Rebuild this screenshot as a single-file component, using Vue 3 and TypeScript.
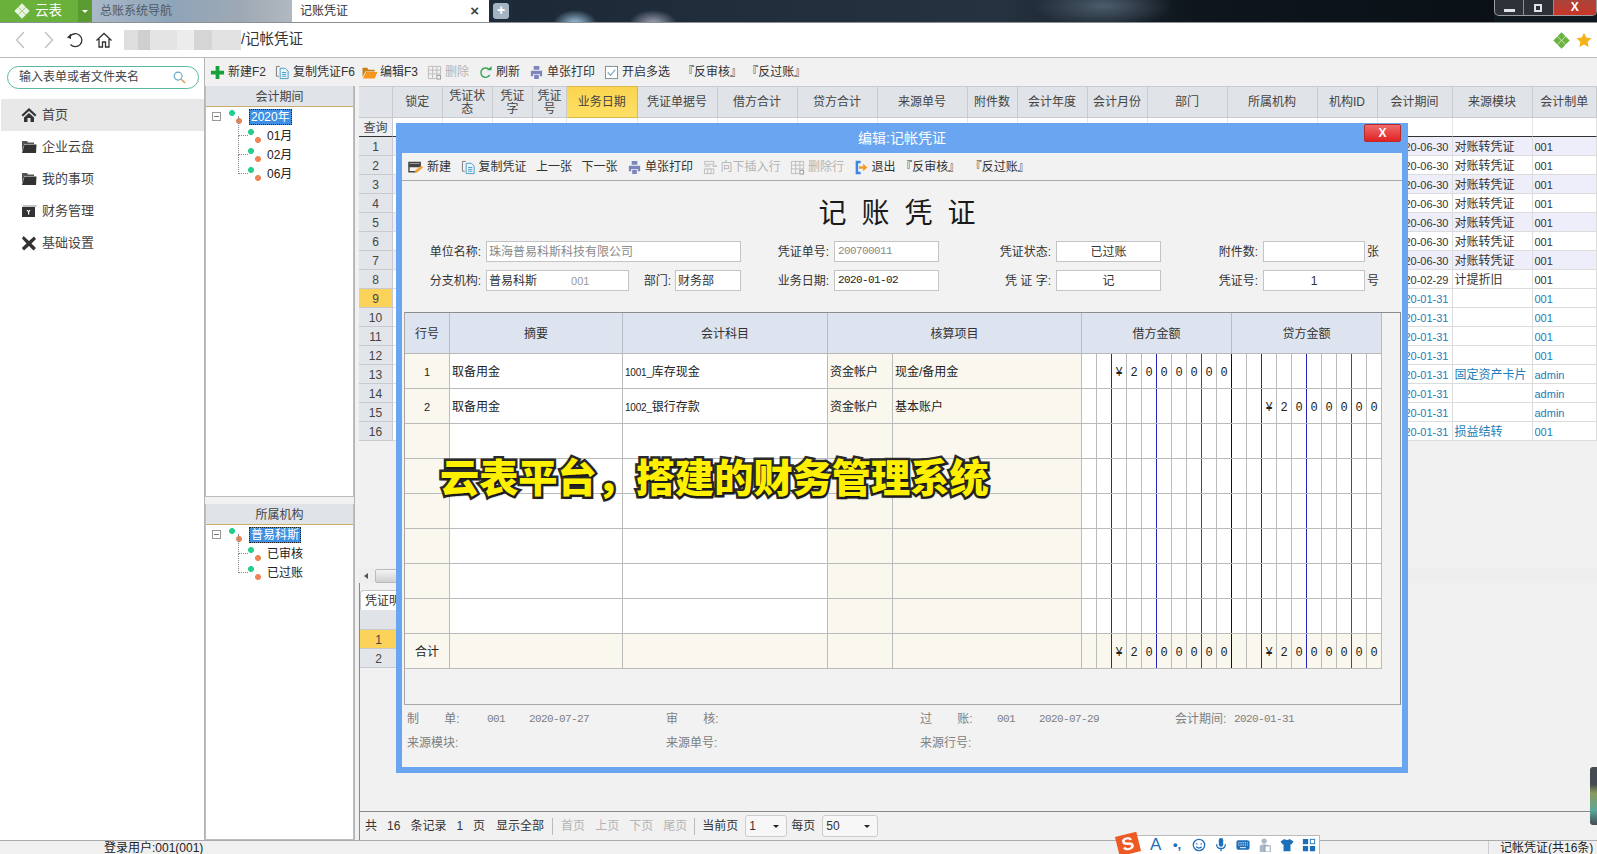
<script setup lang="ts">
interface Row {
  date: string
  mod: string
  user: string
  blue: boolean
}

const headers: string[] = [
  '', '锁定', '凭证状\n态', '凭证\n字', '凭证\n号', '业务日期', '凭证单据号', '借方合计', '贷方合计',
  '来源单号', '附件数', '会计年度', '会计月份', '部门', '所属机构', '机构ID', '会计期间', '来源模块', '会计制单'
]

const rows: Row[] = [
  ...Array.from({ length: 7 }, () => ({ date: '2020-06-30', mod: '对账转凭证', user: '001', blue: false })),
  { date: '2020-02-29', mod: '计提折旧', user: '001', blue: false },
  { date: '2020-01-31', mod: '', user: '001', blue: true },
  { date: '2020-01-31', mod: '', user: '001', blue: true },
  { date: '2020-01-31', mod: '', user: '001', blue: true },
  { date: '2020-01-31', mod: '', user: '001', blue: true },
  { date: '2020-01-31', mod: '固定资产卡片', user: 'admin', blue: true },
  { date: '2020-01-31', mod: '', user: 'admin', blue: true },
  { date: '2020-01-31', mod: '', user: 'admin', blue: true },
  { date: '2020-01-31', mod: '损益结转', user: '001', blue: true }
]

const sideItems = [
  { icon: 'i-home', label: '首页', active: true },
  { icon: 'i-folder-d', label: '企业云盘', active: false },
  { icon: 'i-folder-d', label: '我的事项', active: false },
  { icon: 'i-box', label: '财务管理', active: false },
  { icon: 'i-tools', label: '基础设置', active: false }
]

interface Line {
  no: string
  memo: string
  code: string
  acct: string
  kind: string
  item: string
  debit: string[]
  credit: string[]
}

const money = ['', '', '¥', '2', '0', '0', '0', '0', '0', '0']
const none = Array.from({ length: 10 }, () => '')

const lines: Line[] = [
  { no: '1', memo: '取备用金', code: '1001_', acct: '库存现金', kind: '资金帐户', item: '现金/备用金', debit: money, credit: none },
  { no: '2', memo: '取备用金', code: '1002_', acct: '银行存款', kind: '资金帐户', item: '基本账户', debit: none, credit: money },
  ...Array.from({ length: 6 }, () => ({ no: '', memo: '', code: '', acct: '', kind: '', item: '', debit: none, credit: none }))
]

function cellClass(i: number): string {
  if (i === 1 || i === 4) return 'dg blue'
  if (i === 7) return 'dg red'
  return 'dg'
}
</script>

<template>
  <div class="app">
    <svg class="defs" width="0" height="0" aria-hidden="true">
      <symbol id="i-logo" viewBox="0 0 16 16">
        <path d="M8 .3 11.700 4 8 7.700 4.300 4ZM4 4.300 7.700 8 4 11.700.3 8ZM12 4.300 15.700 8 12 11.700 8.300 8ZM8 8.300 11.700 12 8 15.700 4.300 12Z" fill="currentColor" />
      </symbol>
      <symbol id="i-plus" viewBox="0 0 16 16">
        <path d="M6 1h4v5h5v4h-5v5H6v-5H1V6h5Z" fill="#17a03c" />
      </symbol>
      <symbol id="i-copy" viewBox="0 0 16 16">
        <path d="M5 1.500H1.500V12H4" fill="none" stroke="#777" />
        <path d="M5.500 3.500h5.500l3 3v8h-8.500Z" fill="#eaf5fb" stroke="#4a9bc8" />
        <path d="M7.500 8h4.500M7.500 10h4.500M7.500 12h4.500" stroke="#4a9bc8" />
      </symbol>
      <symbol id="i-open" viewBox="0 0 18 16">
        <path d="M1 3h5l1.500 2H14v2H4L1 13Z" fill="#c9821a" />
        <path d="M4.500 7.500H17L14 14.500H1.500Z" fill="#f7961d" />
      </symbol>
      <symbol id="i-griddel" viewBox="0 0 16 16">
        <path d="M1.500 1.500h13v8M1.500 1.500v13h8M1.500 5.500h13M1.500 9.500h13M6 1.500v13M10.500 1.500v8" fill="none" stroke="#bbb" />
        <rect x="10.500" y="11" width="4" height="4" fill="none" stroke="#999" />
      </symbol>
      <symbol id="i-refresh" viewBox="0 0 16 16">
        <path d="M12.500 10.500A5 5 0 1 1 11.500 4.500" fill="none" stroke="#3aa655" stroke-width="1.500" />
        <path d="M9.500 5.500h5V1Z" fill="#3aa655" />
      </symbol>
      <symbol id="i-print" viewBox="0 0 16 16">
        <path d="M5 1h6v4H5ZM2 6h12v6h-2.500V9.500h-7V12H2ZM5.500 10.500h5V15h-5Z" fill="#7c86bd" />
      </symbol>
      <symbol id="i-check" viewBox="0 0 16 16">
        <rect x="1.500" y="1.500" width="13" height="13" fill="#fff" stroke="#7a8a96" />
        <path d="M4 8l3 3 5-6" fill="none" stroke="#7fa7bb" stroke-width="1.300" />
      </symbol>
      <symbol id="i-new" viewBox="0 0 18 16">
        <path d="M2 2.500h12v2H2ZM2 6h12v1H2ZM2 2.500v10h7" fill="none" stroke="#444" stroke-width="1.500" />
        <path d="M8 14l1-3 6-5 2 2-6 5Z" fill="#f0a030" />
      </symbol>
      <symbol id="i-insert" viewBox="0 0 16 16">
        <path d="M1.500 1.500h10v3h-10ZM1.500 6.500h6M1.500 9.500h10v5h-10ZM5 9.500v5M8.500 9.500v5" fill="none" stroke="#bbb" />
        <path d="M10 6.500h5" stroke="#bbb" stroke-width="1.500" />
      </symbol>
      <symbol id="i-exit" viewBox="0 0 16 18">
        <path d="M7 1H1v16h6v-3H4V4h3Z" fill="#3a86e0" />
        <path d="M5 7.500h5V4.500l5 4.500-5 4.500v-3H5Z" fill="#f59a23" />
      </symbol>
      <symbol id="i-home" viewBox="0 0 16 16">
        <path d="M8 1 .5 8 2 9.500 8 4l6 5.500L15.500 8ZM3 10.500 8 6l5 4.500V15H9.500v-4h-3v4H3Z" fill="#333" />
      </symbol>
      <symbol id="i-folder-d" viewBox="0 0 16 16">
        <path d="M1 2h5l1 1.500h6V5H3.500L1 12Z" fill="#555" />
        <path d="M3.500 5.500H15.500L15 14H1Z" fill="#333" />
      </symbol>
      <symbol id="i-box" viewBox="0 0 16 16">
        <path d="M2 2.500h13.500v1H2Z" fill="#888" />
        <path d="M1 4h13v10H1Z" fill="#333" />
        <path d="M5.500 7h1.500l.5 1 .5-1H9.500L8.200 9v2.500H7V9Z" fill="#fff" />
      </symbol>
      <symbol id="i-tools" viewBox="0 0 16 16">
        <path d="M2.500 1 8 6l5-4.500L15 4l-4.500 4.500L15 13l-2.500 2.500L8 11l-5 4.500L.8 13 5.500 8.500 1 3.500Z" fill="#333" />
      </symbol>
      <symbol id="i-home-o" viewBox="0 0 18 18">
        <path d="M1.500 9.500 9 2.500l7.500 7M4 8v8h3.500v-5h3v5H14V8" fill="none" stroke="#333" stroke-width="1.300" />
      </symbol>
      <symbol id="i-undo" viewBox="0 0 18 18">
        <path d="M4 5.500A6.500 6.500 0 1 1 4.500 13.500" fill="none" stroke="#333" stroke-width="1.300" />
        <path d="M1 6.500 5 2.500V8Z" fill="#333" />
      </symbol>
      <symbol id="i-star" viewBox="0 0 16 16">
        <path d="M8 .8l2.300 4.700 5.200.7-3.800 3.600.9 5.200L8 12.500 3.400 15l.9-5.200L.5 6.200l5.200-.7Z" fill="#f6b21a" />
      </symbol>
      <symbol id="i-search" viewBox="0 0 14 14">
        <circle cx="5.500" cy="5.500" r="4.300" fill="none" stroke="#6aa3c6" stroke-width="1.200" />
        <path d="M8.800 8.800 13 13" stroke="#d89a4a" stroke-width="1.500" />
      </symbol>
      <symbol id="i-smile" viewBox="0 0 16 16">
        <circle cx="8" cy="8" r="6.500" fill="none" stroke="#1c6fb8" stroke-width="1.500" />
        <path d="M5.500 6v1.500M10.500 6v1.500" stroke="#1c6fb8" stroke-width="1.500" />
        <path d="M4.800 10q3.200 3 6.400 0" fill="none" stroke="#1c6fb8" stroke-width="1.300" />
      </symbol>
      <symbol id="i-mic" viewBox="0 0 16 16">
        <rect x="5.500" y="0" width="5" height="10" rx="2.500" fill="#1c6fb8" />
        <path d="M3 7q0 5 5 5t5-5M8 12v3" fill="none" stroke="#1c6fb8" stroke-width="1.500" />
      </symbol>
      <symbol id="i-keys" viewBox="0 0 16 16">
        <rect x=".5" y="2.500" width="15" height="11" rx="2" fill="#1c6fb8" />
        <path d="M2.500 5.500h11M2.500 8h11" stroke="#fff" stroke-dasharray="1.500 1" />
        <path d="M4.500 11h7" stroke="#fff" />
      </symbol>
      <symbol id="i-user" viewBox="0 0 16 16">
        <circle cx="7" cy="3.500" r="3" fill="#a9b8c4" />
        <path d="M2 16v-6q0-3 5-3t5 3v6Z" fill="#a9b8c4" />
        <rect x="8" y="9" width="6" height="7" fill="#fff" stroke="#8b9aa6" />
      </symbol>
      <symbol id="i-shirt" viewBox="0 0 16 16">
        <path d="M5 1 .5 4 3 7.500 4 7v8h8V7l1 .5L15.500 4 11 1Q8 3.500 5 1Z" fill="#1c6fb8" />
      </symbol>
      <symbol id="i-tiles" viewBox="0 0 16 16">
        <path d="M1 1h6v6H1ZM1 9h6v6H1ZM9 9h6v6H9Z" fill="#1c6fb8" />
        <rect x="9.500" y="1.500" width="5" height="5" fill="none" stroke="#1c6fb8" />
      </symbol>
    </svg>

    <header class="tabbar">
      <div class="brand">
        <svg class="brand-logo"><use href="#i-logo" /></svg>
        <span>云表</span>
      </div>
      <div class="brand-drop"><i class="caret-w"></i></div>
      <div class="tab-idle">总账系统导航</div>
      <div class="tab-active">
        <span>记账凭证</span>
        <b class="tab-x">×</b>
      </div>
      <div class="tab-add"><span>+</span></div>
      <div class="sky"></div>
      <div class="winctl">
        <span class="wbtn"><i class="w-min"></i></span>
        <span class="wbtn"><i class="w-max"></i></span>
        <span class="wbtn wclose">X</span>
      </div>
    </header>

    <div class="addr">
      <svg class="chev" viewBox="0 0 10 18"><path d="M9 1 1.500 9 9 17" fill="none" stroke="#bbb" stroke-width="1.200" /></svg>
      <svg class="chev chev2" viewBox="0 0 10 18"><path d="M1 1 8.500 9 1 17" fill="none" stroke="#bbb" stroke-width="1.200" /></svg>
      <svg class="addr-ic undo"><use href="#i-undo" /></svg>
      <svg class="addr-ic"><use href="#i-home-o" /></svg>
      <div class="mosaic"></div>
      <span class="crumb">/记帐凭证</span>
      <svg class="fav fav-logo"><use href="#i-logo" /></svg>
      <svg class="fav"><use href="#i-star" /></svg>
    </div>

    <div class="body">
      <aside class="sidebar">
        <div class="search">
          <span>输入表单或者文件夹名</span>
          <svg class="search-ic"><use href="#i-search" /></svg>
        </div>
        <nav class="menu">
          <div v-for="item in sideItems" :key="item.label" class="menu-item" :class="{ on: item.active }">
            <svg class="menu-ic"><use :href="'#' + item.icon" /></svg>
            <span>{{ item.label }}</span>
          </div>
        </nav>
      </aside>

      <main class="main">
        <div class="tools">
          <span class="tool t1"><svg class="ic"><use href="#i-plus" /></svg>新建F2</span>
          <span class="tool"><svg class="ic"><use href="#i-copy" /></svg>复制凭证F6</span>
          <span class="tool"><svg class="ic ic-w"><use href="#i-open" /></svg>编辑F3</span>
          <span class="tool off"><svg class="ic"><use href="#i-griddel" /></svg>删除</span>
          <span class="tool"><svg class="ic"><use href="#i-refresh" /></svg>刷新</span>
          <span class="tool"><svg class="ic"><use href="#i-print" /></svg>单张打印</span>
          <span class="tool"><svg class="ic"><use href="#i-check" /></svg>开启多选</span>
          <span class="tool br b1">『反审核』</span>
          <span class="tool br b2">『反过账』</span>
        </div>

        <div class="work">
          <div class="trees">
            <section class="tree t-period">
              <h4 class="tree-h">会计期间</h4>
              <div class="node root">
                <i class="minus"></i><i class="dots"></i><span class="sel">2020年</span>
              </div>
              <div class="node child"><i class="dots"></i><span>01月</span></div>
              <div class="node child"><i class="dots"></i><span>02月</span></div>
              <div class="node child last"><i class="dots"></i><span>06月</span></div>
            </section>
            <section class="tree t-org">
              <h4 class="tree-h">所属机构</h4>
              <div class="node root">
                <i class="minus"></i><i class="dots"></i><span class="sel">普易科斯</span>
              </div>
              <div class="node child"><i class="dots"></i><span>已审核</span></div>
              <div class="node child last"><i class="dots"></i><span>已过账</span></div>
            </section>
          </div>

          <div class="right">
            <div class="grid-wrap">
              <div class="g-row g-head">
                <div
                  v-for="(h, i) in headers"
                  :key="i"
                  class="g-h"
                  :class="{ hot: h === '业务日期' }"
                >{{ h }}</div>
              </div>
              <div class="g-row g-query">
                <div class="g-rh q">查询</div>
                <div v-for="n in 18" :key="n" class="g-c"></div>
              </div>
              <div v-for="(r, i) in rows" :key="i" class="g-row g-data" :class="{ alt: i < 7 && i % 2 === 0, link: r.blue }">
                <div class="g-rh" :class="{ cur: i === 8 }">{{ i + 1 }}</div>
                <div v-for="n in 15" :key="n" class="g-c"></div>
                <div class="g-c c-date">{{ r.date }}</div>
                <div class="g-c c-mod">{{ r.mod }}</div>
                <div class="g-c c-user">{{ r.user }}</div>
              </div>
            </div>

            <div class="hbar">
              <i class="arrow-l"></i>
              <i class="thumb"></i>
            </div>

            <div class="lower">
              <div class="sub-tab">凭证明细</div>
              <div class="sub-grid">
                <div class="sub-head"></div>
                <div class="sub-row cur">1</div>
                <div class="sub-row">2</div>
              </div>
            </div>

            <footer class="pager">
              <span>共</span><b class="p16">16</b><span>条记录</span><b class="p1">1</b><span class="p-y">页</span>
              <span class="p-all">显示全部</span>
              <i class="p-sep"></i>
              <span class="p-off">首页</span><span class="p-off">上页</span><span class="p-off">下页</span><span class="p-off">尾页</span>
              <i class="p-sep s2"></i>
              <span>当前页</span>
              <span class="sel-box s-a">1<i class="caret-d"></i></span>
              <span>每页</span>
              <span class="sel-box s-b">50<i class="caret-d"></i></span>
            </footer>
          </div>
        </div>
      </main>
    </div>

    <footer class="status">
      <span class="login">登录用户:001(001)</span>
      <span class="count">记帐凭证(共16条)</span>
    </footer>

    <div class="ime">
      <span class="ime-s"><b>S</b></span>
      <span class="ime-a">A</span>
      <span class="ime-p">•,</span>
      <svg class="ime-ic"><use href="#i-smile" /></svg>
      <svg class="ime-ic"><use href="#i-mic" /></svg>
      <svg class="ime-ic"><use href="#i-keys" /></svg>
      <svg class="ime-ic"><use href="#i-user" /></svg>
      <svg class="ime-ic"><use href="#i-shirt" /></svg>
      <svg class="ime-ic"><use href="#i-tiles" /></svg>
    </div>

    <div class="widget"></div>

    <section class="modal">
      <div class="m-title">
        <span>编辑:记帐凭证</span>
        <button class="m-close" type="button">X</button>
      </div>
      <div class="m-inner">
        <div class="m-tools">
          <span class="mt"><svg class="ic ic-n"><use href="#i-new" /></svg>新建</span>
          <span class="mt"><svg class="ic"><use href="#i-copy" /></svg>复制凭证</span>
          <span class="mt">上一张</span>
          <span class="mt">下一张</span>
          <span class="mt"><svg class="ic"><use href="#i-print" /></svg>单张打印</span>
          <span class="mt off"><svg class="ic"><use href="#i-insert" /></svg>向下插入行</span>
          <span class="mt off"><svg class="ic"><use href="#i-griddel" /></svg>删除行</span>
          <span class="mt"><svg class="ic"><use href="#i-exit" /></svg>退出</span>
          <span class="mt br m1">『反审核』</span>
          <span class="mt br m2">『反过账』</span>
        </div>

        <h1 class="v-title">记账凭证</h1>

        <div class="v-form">
          <label>单位名称:</label>
          <div class="fld muted">珠海普易科斯科技有限公司</div>
          <label>凭证单号:</label>
          <div class="fld muted mono">200700011</div>
          <label>凭证状态:</label>
          <div class="fld center">已过账</div>
          <label>附件数:</label>
          <div class="fld"></div>
          <span class="unit">张</span>

          <label>分支机构:</label>
          <div class="split">
            <div class="fld org"><span>普易科斯</span><span class="org-id">001</span></div>
            <label class="dep-l">部门:</label>
            <div class="fld dep">财务部</div>
          </div>
          <label>业务日期:</label>
          <div class="fld mono dark">2020-01-02</div>
          <label class="wide">凭 证 字:</label>
          <div class="fld center">记</div>
          <label>凭证号:</label>
          <div class="fld center">1</div>
          <span class="unit">号</span>
        </div>

        <div class="v-panel">
          <div class="v-table">
            <div class="vh">行号</div>
            <div class="vh">摘要</div>
            <div class="vh">会计科目</div>
            <div class="vh span2">核算项目</div>
            <div class="vh">借方金额</div>
            <div class="vh">贷方金额</div>

            <template v-for="(l, i) in lines" :key="i">
              <div class="vc cream mid">{{ l.no }}</div>
              <div class="vc">{{ l.memo }}</div>
              <div class="vc"><span class="code">{{ l.code }}</span>{{ l.acct }}</div>
              <div class="vc cream">{{ l.kind }}</div>
              <div class="vc cream">{{ l.item }}</div>
              <div class="vc amt debit">
                <span v-for="(d, k) in l.debit" :key="k" :class="cellClass(k)">{{ d }}</span>
              </div>
              <div class="vc amt">
                <span v-for="(d, k) in l.credit" :key="k" :class="cellClass(k)">{{ d }}</span>
              </div>
            </template>

            <div class="vc cream mid total">合计</div>
            <div class="vc cream"></div>
            <div class="vc cream"></div>
            <div class="vc cream"></div>
            <div class="vc cream"></div>
            <div class="vc cream amt debit">
              <span v-for="(d, k) in money" :key="k" :class="cellClass(k)">{{ d }}</span>
            </div>
            <div class="vc cream amt">
              <span v-for="(d, k) in money" :key="k" :class="cellClass(k)">{{ d }}</span>
            </div>
          </div>
        </div>

        <div class="v-foot">
          <div class="vf"><span class="vl sp">制 单:</span><span class="vn">001</span><span class="vd">2020-07-27</span></div>
          <div class="vf"><span class="vl sp">审 核:</span></div>
          <div class="vf v3"><span class="vl sp">过 账:</span><span class="vn">001</span><span class="vd">2020-07-29</span></div>
          <div class="vf"><span class="vl tight">会计期间:</span><span class="vd">2020-01-31</span></div>
          <div class="vf"><span class="vl">来源模块:</span></div>
          <div class="vf"><span class="vl">来源单号:</span></div>
          <div class="vf"><span class="vl">来源行号:</span></div>
        </div>
      </div>
    </section>

    <div class="caption">云表平台，搭建的财务管理系统</div>
  </div>
</template>

<style>
html, body { margin: 0; padding: 0; background: #fff; }
</style>

<style scoped>
.app {
  position: relative;
  width: 1597px;
  height: 854px;
  overflow: hidden;
  display: flex;
  flex-direction: column;
  font: 12px/1.2 "Liberation Sans", "Noto Sans CJK SC", sans-serif;
  color: #2b2b2b;
  background: #fff;
}
.defs { position: absolute; }
svg { display: block; flex: none; }
i { display: block; flex: none; font-style: normal; }

/* top tab strip */
.tabbar {
  height: 23px;
  flex: none;
  display: flex;
  border-bottom: 1px solid #8a8f94;
  box-sizing: border-box;
  background: #10181f;
}
.brand {
  width: 78px;
  background: #69b13b;
  color: #fff;
  display: flex;
  align-items: center;
  gap: 5px;
  padding-left: 14px;
  box-sizing: border-box;
  font-size: 13.500px;
}
.brand-logo { width: 16px; height: 16px; color: #e9f4df; }
.brand-drop {
  width: 14px;
  background: #5a9a31;
  display: flex;
  align-items: center;
  justify-content: center;
}
.caret-w { border: 3px solid transparent; border-top: 3px solid #fff; border-bottom: 0; }
.tab-idle {
  width: 200px;
  padding-left: 8px;
  box-sizing: border-box;
  line-height: 22px;
  color: #4f5a66;
  background: linear-gradient(90deg, #a9b9ca 0, #8ea4b8 40%, #9fa9b4 75%, #b0b8c0 100%);
}
.tab-active {
  width: 197px;
  background: #fff;
  display: flex;
  align-items: center;
  justify-content: space-between;
  padding: 0 10px 0 8px;
  box-sizing: border-box;
  color: #333;
}
.tab-x { font-size: 15px; color: #444; }
.tab-add {
  width: 24px;
  display: flex;
  align-items: center;
  justify-content: center;
  background: #1d2b3a;
}
.tab-add span {
  width: 16px;
  height: 16px;
  border-radius: 3px;
  background: #a5b4c2;
  color: #fff;
  font: bold 14px/15px "Liberation Sans", sans-serif;
  text-align: center;
}
.sky {
  flex: 1;
  background:
    radial-gradient(ellipse 22px 14px at 62px 24px, #a8cde8 0, transparent 100%),
    radial-gradient(ellipse 24px 14px at 140px 24px, #a9abc0 0, transparent 100%),
    radial-gradient(ellipse 70px 22px at 590px 6px, #4d5d6c 0, transparent 100%),
    linear-gradient(90deg, #1c2a38 0, #25323f 50%, #0e151c 70%, #0a1016 100%);
}
.winctl {
  display: flex;
  height: 16px;
  width: 103px;
  flex: none;
  border: 1px solid #9aa0a6;
  border-top: 0;
  border-radius: 0 0 5px 5px;
  box-sizing: border-box;
  background: #2c3238;
  overflow: hidden;
}
.wbtn {
  flex: 1;
  display: flex;
  align-items: center;
  justify-content: center;
  border-right: 1px solid #8a8f94;
}
.wclose {
  flex: 1.500;
  border: 0;
  color: #fff;
  font-weight: bold;
  background: linear-gradient(#a9443b, #c9362a);
}
.w-min { width: 11px; height: 3px; background: #dfe3e6; margin-top: 6px; }
.w-max { width: 8px; height: 8px; border: 2px solid #dfe3e6; box-sizing: border-box; }

/* address */
.addr {
  height: 35px;
  flex: none;
  display: flex;
  align-items: center;
  padding: 0 5px 0 15px;
  box-sizing: border-box;
  border-bottom: 1px solid #bbb;
}
.chev { width: 10px; height: 18px; }
.chev2 { margin-left: 19px; }
.addr-ic { width: 18px; height: 18px; margin-left: 11px; }
.undo { margin-left: 12px; }
.mosaic {
  width: 117px;
  height: 20px;
  margin-left: 11px;
  background:
    linear-gradient(90deg, #dedede 0 12%, #cfcfcf 12% 22%, #e4e4e4 22% 45%, #ececec 45% 60%, #d5d5d5 60% 75%, #e2e2e2 75% 100%);
}
.crumb { font-size: 14.500px; color: #333; flex: 1; }
.fav { width: 16px; height: 16px; margin-left: 6px; }
.fav-logo { color: #6db33f; width: 17px; height: 17px; }

/* body */
.body { flex: 1; display: flex; min-height: 0; }
.sidebar {
  width: 204px;
  flex: none;
  box-sizing: border-box;
  padding-top: 8px;
}
.search {
  width: 192px;
  height: 23px;
  margin-left: 7px;
  border: 1px solid #5bb8a0;
  border-radius: 12px;
  box-sizing: border-box;
  display: flex;
  align-items: center;
  justify-content: space-between;
  padding: 0 12px 0 11px;
  color: #444;
}
.search-ic { width: 13px; height: 13px; }
.menu { margin-top: 10px; }
.menu-item {
  height: 32px;
  margin-left: 1px;
  display: flex;
  align-items: center;
  gap: 5px;
  padding-left: 20px;
  font-size: 13px;
  color: #444;
}
.menu-item.on { background: #e8e8e8; }
.menu-ic { width: 16px; height: 16px; }

/* main */
.main {
  flex: 1;
  min-width: 0;
  display: flex;
  flex-direction: column;
  border-left: 1px solid #b5b5b5;
  background: #f1f1f1;
}
.tools {
  height: 28px;
  flex: none;
  display: flex;
  align-items: center;
  padding-left: 5px;
  gap: 9px;
}
.tool, .mt { display: flex; align-items: center; gap: 3px; white-space: nowrap; color: #333; }
.off { color: #b4b4b4; }
.ic { width: 15px; height: 15px; }
.ic-w { width: 18px; margin: 0 -2px 0 -3px; }
.ic-n { width: 17px; }
.br { font-feature-settings: "palt"; }
.b1 { margin-left: 9px; }
.b2 { margin-left: 7px; }
.work { flex: 1; display: flex; min-height: 0; }

.trees {
  width: 149px;
  flex: none;
  display: flex;
  flex-direction: column;
  gap: 7px;
}
.tree {
  border: 1px solid #bdbdbd;
  border-top: 0;
  background: #fff;
  box-sizing: border-box;
}
.t-period { height: 411px; flex: none; }
.t-org { flex: 1; }
.tree-h {
  margin: 0;
  height: 21px;
  line-height: 23px;
  box-sizing: border-box;
  text-align: center;
  font-weight: normal;
  font-size: 12px;
  color: #444;
  background: #e0e3e8;
  border-bottom: 1px solid #c9ab6a;
}
.node {
  position: relative;
  height: 19px;
  display: flex;
  align-items: center;
  color: #222;
}
.node span { padding-top: 2px; }
.root { padding-left: 6px; }
.child { padding-left: 42px; gap: 4px; }
.child::before {
  content: "";
  position: absolute;
  left: 32px;
  top: -10px;
  height: 19px;
  width: 9px;
  border-left: 1px dotted #888;
  border-bottom: 1px dotted #888;
}
.minus {
  width: 9px;
  height: 9px;
  border: 1px solid #999;
  box-sizing: border-box;
  position: relative;
  background: linear-gradient(#777, #777) center / 5px 1px no-repeat;
}
.dots {
  width: 15px;
  height: 14px;
  margin-left: 8px;
  background:
    radial-gradient(circle 3px at 3px 3px, #22cf8c 95%, transparent 100%),
    radial-gradient(circle 3px at 10px 11px, #ee8456 95%, transparent 100%);
}
.child .dots { margin-left: 0; }
.node .sel {
  margin-left: 5px;
  padding: 0 2px;
  height: 16px;
  line-height: 16px;
  box-sizing: border-box;
  color: #fff;
  background: #3f8fe2;
  outline: 1px dotted #222;
  outline-offset: -1px;
}

/* right column */
.right {
  flex: 1;
  min-width: 0;
  display: flex;
  flex-direction: column;
  border-left: 1px solid #b5b5b5;
  margin-left: 0;
  padding-left: 4px;
}
.grid-wrap { height: 482px; flex: none; }
.g-row {
  display: grid;
  grid-template-columns: 34px 49.500px 50.500px 40px 34px 70.500px 80px 80px 80px 90px 50px 70px 60px 80px 90px 60px 75px 80px 1fr;
}
.g-head { height: 32px; }
.g-h {
  display: flex;
  align-items: center;
  justify-content: center;
  text-align: center;
  white-space: pre-line;
  line-height: 13px;
  padding-top: 1px;
  color: #444;
  background: #e0e3e7;
  border-right: 1px solid #c7cace;
  border-top: 1px solid #c7cace;
  border-bottom: 1px solid #c7cace;
  box-sizing: border-box;
}
.hot { background: linear-gradient(#fbd450, #ffe066); border-color: #d9b94a; }
.g-query { height: 19px; background: #fff; }
.g-query .g-c { border-right: 1px solid #e4e4e4; border-bottom: 1px solid #333; }
.g-data { height: 19px; background: #fff; color: #333; }
.g-data.alt { background: #eeeefa; }
.g-data.link { color: #1d7db6; }
.g-rh {
  display: flex;
  align-items: center;
  justify-content: center;
  padding-top: 2px;
  background: #e2e6ea;
  border-right: 1px solid #c7cace;
  border-bottom: 1px solid #c7cace;
  box-sizing: border-box;
  color: #444;
}
.g-rh.q { background: #eceef0; border-bottom: 1px solid #333; }
.g-rh.cur { background: #fbd35a; }
.g-c {
  border-right: 1px solid #dcdcdc;
  border-bottom: 1px solid #dcdcdc;
  box-sizing: border-box;
  line-height: 20px;
  white-space: nowrap;
  overflow: hidden;
}
.c-date { font-size: 11px; text-align: right; padding-right: 3px; }
.c-mod { padding-left: 2px; }
.c-user { font-size: 11px; padding-left: 2px; }
.hbar {
  height: 15px;
  flex: none;
  display: flex;
  align-items: center;
  padding-left: 5px;
  gap: 3px;
  background: #eee;
}
.arrow-l { border: 3px solid transparent; border-right: 4px solid #555; border-left: 0; }
.thumb {
  width: 100px;
  height: 14px;
  margin-left: 4px;
  border: 1px solid #bbb;
  border-radius: 2px;
  box-sizing: border-box;
  background: linear-gradient(#f4f4f4, #d0d0d0);
}
.lower {
  flex: 1;
  padding-top: 7px;
  border-left: 1px solid #888;
  min-height: 0;
}
.sub-tab {
  width: 62px;
  height: 20px;
  line-height: 21px;
  padding-left: 4px;
  box-sizing: border-box;
  border: 1px solid #c5c5c5;
  border-bottom: 0;
  border-radius: 4px 4px 0 0;
  background: #fff;
  color: #333;
}
.sub-grid { width: 37px; }
.sub-head { height: 20px; background: #e0e3e7; border-bottom: 1px solid #c7cace; box-sizing: border-box; }
.sub-row {
  height: 19px;
  line-height: 21px;
  text-align: center;
  background: #e2e6ea;
  border-bottom: 1px solid #c7cace;
  box-sizing: border-box;
  color: #444;
}
.sub-row.cur { background: #fbd35a; }
.pager {
  height: 29px;
  flex: none;
  display: flex;
  align-items: center;
  border-top: 1px solid #888;
  border-left: 1px solid #888;
  box-sizing: border-box;
  padding-left: 5px;
  gap: 10px;
  color: #333;
  white-space: nowrap;
}
.pager b { font-weight: normal; }
.p-all { margin-left: 1px; }
.p-sep { width: 1px; height: 17px; background: #bbb; margin: 0 -2px; }
.s2 { margin: 0 -3px; }
.p-off { color: #b4b4b4; }
.sel-box {
  position: relative;
  height: 22px;
  line-height: 21px;
  padding-left: 3px;
  box-sizing: border-box;
  border: 1px solid #ccc;
  border-radius: 3px;
  background: #f7f7f7;
  margin: 0 -6px 0 -3px;
}
.s-a { width: 42px; }
.s-b { width: 56px; }
.caret-d {
  position: absolute;
  right: 7px;
  top: 9px;
  border: 3px solid transparent;
  border-top: 3px solid #222;
  border-bottom: 0;
}

/* status */
.status {
  height: 14px;
  flex: none;
  position: relative;
  border-top: 1px solid #aaa;
  box-sizing: border-box;
  background: #f0f0f0;
  display: flex;
  justify-content: space-between;
  padding: 0 3px 0 104px;
  line-height: 15px;
  overflow: hidden;
  color: #222;
}
.count { border-left: 1px solid #ccc; padding-left: 11px; width: 94px; }

/* IME bar */
.ime {
  position: absolute;
  left: 1122px;
  top: 835px;
  width: 198px;
  height: 19px;
  box-sizing: border-box;
  background: #fff;
  border: 1px solid #bbb;
  border-bottom: 0;
  display: flex;
  align-items: center;
  padding-left: 27px;
  gap: 8px;
  overflow: visible;
}
.ime-s {
  position: absolute;
  left: -6px;
  top: -2px;
  width: 22px;
  height: 20px;
  background: #ee5a24;
  transform: rotate(-14deg);
  color: #fff;
  text-align: center;
  font: bold 18px/20px "Liberation Sans", sans-serif;
}
.ime-s b { font-weight: 900; }
.ime-a { color: #1c6fb8; font: 17px/18px "Liberation Sans", sans-serif; width: 12px; }
.ime-p { color: #1c6fb8; font: bold 13px/14px "Liberation Sans", sans-serif; width: 14px; text-align: center; }
.ime-ic { width: 14px; height: 14px; }
.widget {
  position: absolute;
  right: 0;
  top: 767px;
  width: 7px;
  height: 58px;
  border-radius: 3px 0 0 3px;
  background: linear-gradient(#444b52 0 30%, #8a9a5a 45%, #5aa89a 75%, #444b52 100%);
}

/* modal */
.modal {
  position: absolute;
  left: 396px;
  top: 123px;
  width: 1012px;
  height: 650px;
  background: #69a5f0;
  padding: 0 6px 6px;
  box-sizing: border-box;
  display: flex;
  flex-direction: column;
}
.m-title {
  height: 30px;
  flex: none;
  position: relative;
  color: #fff;
  font-size: 14px;
  line-height: 30px;
  text-align: center;
}
.m-close {
  position: absolute;
  right: 1px;
  top: 1px;
  width: 37px;
  height: 18px;
  padding: 0;
  border: 1px solid #b72a2a;
  border-radius: 2px;
  color: #fff;
  font: bold 12px/16px "Liberation Sans", sans-serif;
  background: linear-gradient(#f06a6a, #e02222);
}
.m-inner {
  flex: 1;
  min-height: 0;
  background: #f2f2f2;
  display: flex;
  flex-direction: column;
}
.m-tools {
  height: 28px;
  flex: none;
  box-sizing: border-box;
  display: flex;
  align-items: center;
  padding: 1px 0 0 5px;
  gap: 9.500px;
  border-bottom: 1px solid #aaa;
}
.m1 { margin-left: 1px; }
.m2 { margin-left: 12px; }
.v-title {
  margin: 0;
  height: 60px;
  flex: none;
  box-sizing: border-box;
  text-align: center;
  padding-left: 5px;
  font: normal 28px/60px "Noto Sans CJK SC", sans-serif;
  letter-spacing: 15px;
  color: #1a1a1a;
}
.v-form {
  flex: none;
  display: grid;
  grid-template-columns: 84px 255px 93px 105px 117px 105px 102px 102px 14px;
  grid-auto-rows: 21px;
  row-gap: 8px;
  color: #333;
}
.v-form label { text-align: right; padding-right: 5px; line-height: 23px; white-space: nowrap; }
.fld {
  height: 21px;
  line-height: 21px;
  box-sizing: border-box;
  border: 1px solid #c4c4c4;
  background: #fff;
  padding: 0 2px;
  white-space: nowrap;
  overflow: hidden;
}
.muted { color: #8a8a8a; }
.mono { font: 11px/19px "Liberation Mono", monospace; letter-spacing: -0.600px; padding-left: 3px; }
.dark { color: #222; }
.center { text-align: center; }
.unit { line-height: 23px; padding-left: 2px; }
.split { display: flex; }
.org { width: 143px; flex: none; display: flex; }
.org-id { margin-left: 34px; color: #999; font-size: 11px; }
.v-form .dep-l { width: 46px; flex: none; padding-right: 4px; box-sizing: border-box; }
.dep { flex: 1; }
.v-panel {
  flex: none;
  height: 393px;
  margin: 21px 1px 0 2px;
  border: 1px solid #a8a8a8;
  border-top-color: #8c8c8c;
  border-right-color: #8c8c8c;
  box-sizing: border-box;
  background: #f2f2f2;
}
.v-table {
  display: grid;
  grid-template-columns: 45px 173px 205px 65px 189px 150px 150px;
  grid-template-rows: 41px repeat(9, 35px);
  width: 977px;
}
.vh {
  display: flex;
  align-items: center;
  justify-content: center;
  padding-top: 3px;
  background: #dde4f0;
  border-right: 1px solid #b8bcc4;
  border-bottom: 1px solid #b8b8b8;
  box-sizing: border-box;
  color: #333;
}
.span2 { grid-column: span 2; }
.vc {
  display: flex;
  align-items: center;
  padding: 3px 0 0 2px;
  background: #fff;
  border-right: 1px solid #bbb;
  border-bottom: 1px solid #bbb;
  box-sizing: border-box;
  white-space: nowrap;
  color: #222;
}
.cream { background: #faf8ee; }
.vc.mid { justify-content: center; padding: 3px 0 0; font-size: 11px; }
.vc.total { font-size: 12px; }
.code { font-size: 10px; letter-spacing: -0.200px; }
.vc.amt { padding: 0; align-items: stretch; border-right: 0; }
.dg {
  width: 15px;
  flex: none;
  display: flex;
  align-items: center;
  justify-content: center;
  padding-top: 3px;
  box-sizing: border-box;
  border-right: 1px solid #bbb;
  font: 12px/1 "Liberation Mono", monospace;
  color: #222;
}
.dg.blue { border-right-color: #2424b8; }
.dg.red { border-right-color: #b62024; }
.debit .dg:last-child { border-right-color: #111; }
.v-foot {
  flex: 1;
  display: grid;
  grid-template-columns: 259px 254px 255px 1fr;
  grid-auto-rows: 24px;
  padding: 2px 0 0 5px;
  color: #808080;
}
.vf { display: flex; align-items: center; white-space: nowrap; }
.vl { width: 80px; flex: none; }
.vl.sp { word-spacing: 22px; }
.v3 .vl.sp { width: 77px; }
.vl.tight { width: 59px; }
.vn { font: 11px/1 "Liberation Mono", monospace; letter-spacing: -0.600px; width: 42px; flex: none; }
.vd { font: 11px/1 "Liberation Mono", monospace; letter-spacing: -0.600px; }

.caption {
  position: absolute;
  left: 440px;
  top: 453px;
  font: 900 39.200px/44px "Noto Sans CJK SC", sans-serif;
  color: #fff000;
  white-space: nowrap;
  -webkit-text-stroke: 5px #2a2a2a;
  paint-order: stroke fill;
  text-shadow: 1px 2px 2px rgba(0, 0, 0, 0.45);
}
</style>
